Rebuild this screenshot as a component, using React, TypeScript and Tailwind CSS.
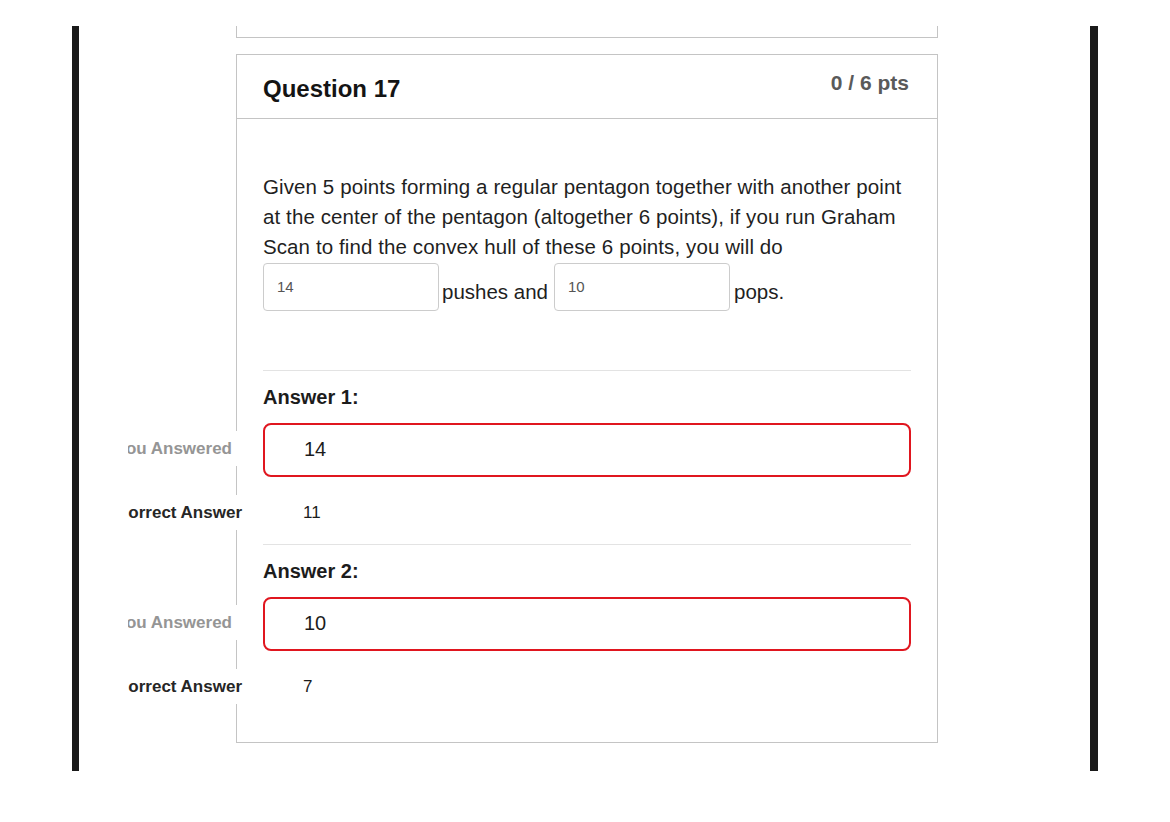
import React from 'react';

interface AnswerBlockProps {
  title: string;
  given: string;
  correct: string;
  first?: boolean;
}

function AnswerBlock({ title, given, correct, first }: AnswerBlockProps) {
  return (
    <div>
      <div className={`h-px bg-[#e3e3e3] ${first ? 'mt-[59px]' : 'mt-[14px]'}`} />
      <h3 className="mt-[14px] text-[20px] leading-[24px] font-bold text-[#1c1c1c]">{title}</h3>

      {/* what the student typed */}
      <div className="relative mt-[14px]">
        <div className="absolute top-[8px] left-[-163px] w-[144px] h-[35px] bg-white flex items-center justify-end pr-[12px] text-[17px] font-bold text-[#959595] whitespace-nowrap">
          You Answered
        </div>
        <div className="h-[54px] border-2 border-[#e0161f] rounded-[8px] flex items-center pl-[39px] pb-[3px] text-[20px] text-[#1c1c1c]">
          {given}
        </div>
      </div>

      {/* the expected value */}
      <div className="relative mt-[18px] h-[35px] flex items-center pl-[40px] text-[17px] text-[#1c1c1c]">
        <div className="absolute top-0 left-[-163px] w-[144px] h-[35px] bg-white flex items-center justify-end pr-[2px] text-[17px] font-bold text-[#262626] whitespace-nowrap">
          Correct Answer
        </div>
        {correct}
      </div>
    </div>
  );
}

function InlineBox({ value }: { value: string }) {
  return (
    <div className="w-[176px] h-[48px] shrink-0 border border-[#cccccc] rounded-[4px] flex items-center px-[13px] text-[15px] text-[#555555]">
      {value}
    </div>
  );
}

export default function App() {
  return (
    <div className="min-h-[822px] bg-white pt-[26px] font-['Liberation_Sans',Arial,sans-serif] text-[#1c1c1c]">
      {/* dark framed viewport */}
      <div className="ml-[72px] w-[1026px] h-[745px] border-l-[7px] border-r-[8px] border-[#1a1a1a] overflow-hidden">
        <div className="ml-[49px] h-full overflow-hidden">
          {/* tail of the previous question */}
          <div className="ml-[108px] w-[702px] h-[12px] border-x border-b border-[#c4c4c4]" />

          <div className="ml-[108px] mt-[16px] w-[702px] border border-[#c4c4c4]">
            <div className="h-[64px] flex justify-between items-start px-[26px] border-b border-[#c4c4c4]">
              <h2 className="mt-[20px] text-[24px] leading-[28px] font-bold text-[#141414]">Question 17</h2>
              <span className="mt-[16px] mr-[2px] text-[21px] leading-[24px] font-bold text-[#5a5a5a]">0 / 6 pts</span>
            </div>

            <div className="px-[26px] pt-[53px] pb-[38px]">
              <p className="text-[20.5px] leading-[30px] tracking-[0.1px] text-[#1f1f1f]">
                Given 5 points forming a regular pentagon together with another point at the center of the pentagon
                (altogether 6 points), if you run Graham Scan to find the convex hull of these 6 points, you will do
              </p>
              <div className="mt-[1px] flex items-start text-[20.5px] text-[#1f1f1f]">
                <InlineBox value="14" />
                <span className="ml-[3px] mr-[6px] mt-[14px] leading-[30px] whitespace-nowrap">pushes and</span>
                <InlineBox value="10" />
                <span className="ml-[4px] mt-[14px] leading-[30px]">pops.</span>
              </div>

              <AnswerBlock first title="Answer 1:" given="14" correct="11" />
              <AnswerBlock title="Answer 2:" given="10" correct="7" />
            </div>
          </div>
        </div>
      </div>
    </div>
  );
}
